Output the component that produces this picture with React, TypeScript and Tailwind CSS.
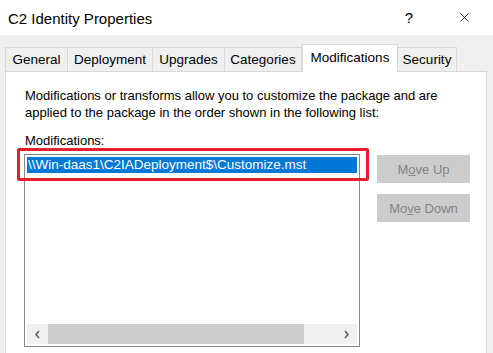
import { X } from 'lucide-react';

const tabs = [
    { label: 'General', w: 'w-[63px]' },
    { label: 'Deployment', w: 'w-[85px]' },
    { label: 'Upgrades', w: 'w-[72px]' },
    { label: 'Categories', w: 'w-[77px]' },
    { label: 'Modifications', w: 'w-[96px]' },
    { label: 'Security', w: 'w-[59px]' },
];

export default function App() {
    const active = 'Modifications';

    return (
        <div className="w-[493px] h-[353px] overflow-hidden bg-white text-black font-['Liberation_Sans',Arial,sans-serif]">
            {/* Title bar */}
            <div className="h-[35px] flex items-center pl-[8px]">
                <span className="text-[15px] leading-none pt-[1px]">C2 Identity Properties</span>
                <span className="ml-auto mr-[44px] text-[15px] leading-none">?</span>
                <X className="w-[15px] h-[15px] mr-[21px]" strokeWidth={1.2} />
            </div>

            {/* Body */}
            <div className="bg-[#f0f0f0] h-[318px] pl-[5px] pt-[9px]">
                {/* Tabs */}
                <div className="flex items-end h-[27px] relative z-10">
                    {tabs.map((t, i) =>
                        t.label === active ? (
                            <div
                                key={t.label}
                                className={`${t.w} h-[28px] -mb-[1px] bg-white border border-b-0 border-[#d9d9d9] flex justify-center pt-[4px] text-[13.5px] leading-[17px]`}
                            >
                                {t.label}
                            </div>
                        ) : (
                            <div
                                key={t.label}
                                className={`${t.w} h-[24px] bg-[#f0f0f0] border-t border-r border-[#d9d9d9] flex items-center justify-center text-[13.5px] leading-[17px] ${i === 0 ? 'border-l' : ''}`}
                            >
                                {t.label}
                            </div>
                        )
                    )}
                </div>

                {/* Panel */}
                <div className="w-[482px] h-[300px] bg-white border border-[#d9d9d9] pl-[18px] pt-[15px] text-[13px] leading-[17px]">
                    <p className="pl-[1px]">
                        Modifications or transforms allow you to customize the package and are
                        <br />
                        applied to the package in the order shown in the following list:
                    </p>
                    <p className="mt-[11px] pl-[1px]">Modifications:</p>

                    <div className="flex mt-[5px]">
                        {/* List box */}
                        <div className="relative w-[336px] h-[193px] border border-[#828790] p-[2px] flex flex-col">
                            <div className="h-[16px] bg-[#0078d7] text-white text-[13.5px] leading-[16px] pl-[1px] whitespace-nowrap">
                                \\Win-daas1\C2IADeployment$\Customize.mst
                            </div>
                            <div className="flex-1" />
                            {/* Horizontal scrollbar */}
                            <div className="h-[20px] flex bg-[#f0f0f0]">
                                <div className="w-[21px] flex items-center justify-center">
                                    <svg width="7" height="9" viewBox="0 0 7 9">
                                        <path d="M5 1 L2 4.5 L5 8" stroke="#606060" strokeWidth="1.6" fill="none" />
                                    </svg>
                                </div>
                                <div className="w-[256px] bg-[#cdcdcd]" />
                                <div className="flex-1" />
                                <div className="w-[21px] flex items-center justify-center">
                                    <svg width="7" height="9" viewBox="0 0 7 9">
                                        <path d="M2 1 L5 4.5 L2 8" stroke="#606060" strokeWidth="1.6" fill="none" />
                                    </svg>
                                </div>
                            </div>

                            {/* Red highlight */}
                            <div className="absolute left-[-8px] top-[-7px] w-[352px] h-[33px] border-[3px] border-[#e5202e] rounded-[2px]" />
                        </div>

                        {/* Buttons */}
                        <div className="ml-[17px] mt-[1px] flex flex-col gap-[11px]">
                            <button className="w-[93px] h-[28px] bg-[#cccccc] text-[#838383] text-[13px]">
                                M<span className="underline">o</span>ve Up
                            </button>
                            <button className="w-[93px] h-[28px] bg-[#cccccc] text-[#838383] text-[13px]">
                                Mo<span className="underline">v</span>e Down
                            </button>
                        </div>
                    </div>
                </div>
            </div>
        </div>
    );
}
